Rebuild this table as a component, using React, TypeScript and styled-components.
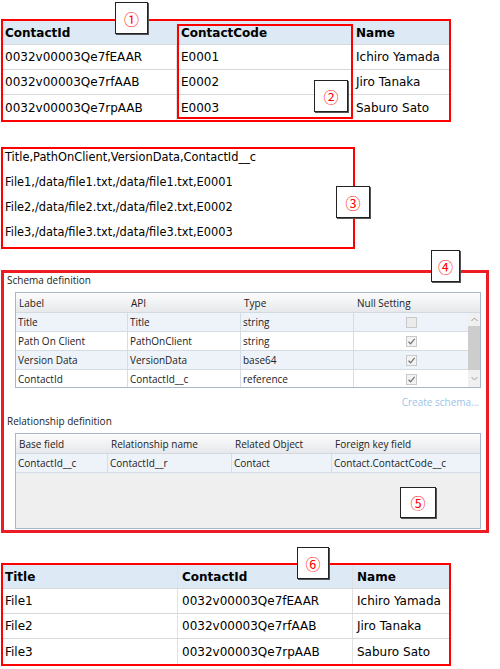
import React from 'react';
import styled, { createGlobalStyle } from 'styled-components';

const GlobalStyle = createGlobalStyle`
  html, body { margin: 0; padding: 0; background: #ffffff; }
  body { font-family: "DejaVu Sans", Verdana, sans-serif; }
`;

const Page = styled.div`
  position: relative;
  width: 500px;
  height: 669px;
  overflow: hidden;
  box-sizing: border-box;
  padding: 19px 0 0 1px;
  display: flex;
  flex-direction: column;
  align-items: flex-start;
`;

/* ---------- red framed excel-like tables ---------- */
const RedFrame = styled.div<{ $w: number; $mt?: number }>`
  position: relative;
  width: ${(p) => p.$w}px;
  margin-top: ${(p) => p.$mt ?? 0}px;
  border: 2px solid #ff0000;
  box-sizing: border-box;
`;

const InnerRedBox = styled.div`
  position: absolute;
  left: 174px;
  top: 3px;
  width: 176px;
  height: 95px;
  border: 2px solid #ff0000;
  box-sizing: border-box;
  pointer-events: none;
`;

const TRow = styled.div<{ $cols: string; $header?: boolean; $last?: boolean }>`
  display: grid;
  grid-template-columns: ${(p) => p.$cols};
  height: ${(p) => (p.$header ? 24 : 25)}px;
  background: ${(p) => (p.$header ? '#dde9f5' : '#ffffff')};
  border-bottom: ${(p) => (p.$last ? 'none' : '1px solid #d9d9d9')};
  box-sizing: border-box;
`;

const TCell = styled.div<{ $header?: boolean }>`
  display: flex;
  align-items: center;
  padding-left: 4px;
  font-size: 12px;
  font-weight: ${(p) => (p.$header ? 700 : 400)};
  color: #000000;
  white-space: nowrap;
  border-right: 1px solid #e1e1e1;
  &:first-child { padding-left: 2px; }
  &:last-child { border-right: none; }
`;

/* ---------- CSV text ---------- */
const CsvFrame = styled.div`
  width: 354px;
  margin-top: 25px;
  border: 2px solid #ff0000;
  box-sizing: border-box;
  padding: 0 4px 6px 2px;
  display: flex;
  flex-direction: column;
  gap: 8px;
`;

const CsvLine = styled.div`
  font-size: 11.4px;
  line-height: 17px;
  color: #000000;
  white-space: nowrap;
`;

/* ---------- schema panel ---------- */
const Panel = styled.div`
  width: 488px;
  margin-top: 21px;
  border: 3px solid #ed1c24;
  box-sizing: border-box;
  padding: 0 5px 1px 3px;
  display: flex;
  flex-direction: column;
  font-family: "Open Sans", "Liberation Sans", sans-serif;
  font-size: 10px;
  color: #222222;
`;

const PanelLabel = styled.div<{ $mt?: number }>`
  line-height: 14px;
  margin-top: ${(p) => p.$mt ?? 0}px;
  white-space: nowrap;
`;

const LinkText = styled.div`
  line-height: 14px;
  margin-top: 7px;
  margin-right: 2px;
  align-self: flex-end;
  color: #9dc3e6;
  white-space: nowrap;
`;

const Grid = styled.div<{ $empty?: boolean }>`
  margin: 5px 0 0 8px;
  width: 466px;
  height: 96px;
  border: 1px solid #a7b7ca;
  box-sizing: border-box;
  display: flex;
  flex-direction: column;
  overflow: hidden;
  background: ${(p) => (p.$empty ? '#efefef' : '#ffffff')};
`;

const GridHeader = styled.div<{ $cols: string }>`
  display: grid;
  grid-template-columns: ${(p) => p.$cols};
  height: 20px;
  flex: 0 0 20px;
  background: linear-gradient(#fcfcfc, #e6e8eb);
  border-bottom: 1px solid #d3d9e1;
  box-sizing: border-box;
`;

const HeadCell = styled.div`
  display: flex;
  align-items: center;
  padding-left: 3px;
  white-space: nowrap;
  color: #222222;
`;

const GridBody = styled.div`
  display: flex;
  flex: 1;
  min-height: 0;
`;

const RowsArea = styled.div`
  flex: 1;
  display: flex;
  flex-direction: column;
  overflow: hidden;
`;

const GRow = styled.div<{ $cols: string; $tint?: boolean }>`
  display: grid;
  grid-template-columns: ${(p) => p.$cols};
  height: 19px;
  flex: 0 0 19px;
  background: ${(p) => (p.$tint ? '#eef3fa' : '#ffffff')};
  border-bottom: 1px solid #d6dce4;
  box-sizing: border-box;
`;

const GCell = styled.div<{ $center?: boolean }>`
  display: flex;
  align-items: center;
  justify-content: ${(p) => (p.$center ? 'center' : 'flex-start')};
  padding-left: ${(p) => (p.$center ? 0 : 2)}px;
  border-right: 1px solid #d6dce4;
  white-space: nowrap;
  overflow: hidden;
  &:last-child { border-right: none; }
`;

const Scrollbar = styled.div`
  width: 12px;
  flex: 0 0 12px;
  background: #f0f0f0;
  display: flex;
  flex-direction: column;
`;

const ScrollBtn = styled.div<{ $h: number }>`
  height: ${(p) => p.$h}px;
  display: flex;
  align-items: center;
  justify-content: center;
`;

const Thumb = styled.div`
  height: 44px;
  background: #cdcdcd;
`;

const CheckBox = styled.span<{ $on: boolean }>`
  width: 11px;
  height: 11px;
  box-sizing: border-box;
  border: 1px solid #c9c9c9;
  background: ${(p) => (p.$on ? '#f3f3f3' : '#ebebeb')};
  display: flex;
  align-items: center;
  justify-content: center;
`;

/* ---------- callouts ---------- */
const Callout = styled.div<{ $x: number; $y: number; $w: number; $h: number }>`
  position: absolute;
  left: ${(p) => p.$x}px;
  top: ${(p) => p.$y}px;
  width: ${(p) => p.$w}px;
  height: ${(p) => p.$h}px;
  box-sizing: border-box;
  background: #ffffff;
  border: 1px solid #222222;
  box-shadow: 1px 1px 0 #555555;
  display: flex;
  align-items: center;
  justify-content: center;
  font-family: "Noto Sans CJK JP", "DejaVu Sans", sans-serif;
  font-size: 15px;
  line-height: 1;
  color: #ff0000;
`;

const Chevron = ({ up }: { up?: boolean }) => (
  <svg width="7" height="5" viewBox="0 0 7 5">
    <path
      d={up ? 'M0.5 4 L3.5 1 L6.5 4' : 'M0.5 1 L3.5 4 L6.5 1'}
      fill="none"
      stroke="#9a9a9a"
      strokeWidth="1"
    />
  </svg>
);

const Check = ({ on }: { on: boolean }) => (
  <CheckBox $on={on}>
    {on && (
      <svg width="9" height="9" viewBox="0 0 9 9">
        <path d="M1.5 4.8 L3.6 6.8 L7.6 1.8" fill="none" stroke="#767676" strokeWidth="1.3" />
      </svg>
    )}
  </CheckBox>
);

const contacts = [
  ['0032v00003Qe7fEAAR', 'E0001', 'Ichiro Yamada'],
  ['0032v00003Qe7rfAAB', 'E0002', 'Jiro Tanaka'],
  ['0032v00003Qe7rpAAB', 'E0003', 'Saburo Sato'],
];

const files = [
  ['File1', '0032v00003Qe7fEAAR', 'Ichiro Yamada'],
  ['File2', '0032v00003Qe7rfAAB', 'Jiro Tanaka'],
  ['File3', '0032v00003Qe7rpAAB', 'Saburo Sato'],
];

const csv = [
  'Title,PathOnClient,VersionData,ContactId__c',
  'File1,/data/file1.txt,/data/file1.txt,E0001',
  'File2,/data/file2.txt,/data/file2.txt,E0002',
  'File3,/data/file3.txt,/data/file3.txt,E0003',
];

const schema: [string, string, string, boolean][] = [
  ['Title', 'Title', 'string', false],
  ['Path On Client', 'PathOnClient', 'string', true],
  ['Version Data', 'VersionData', 'base64', true],
  ['ContactId', 'ContactId__c', 'reference', true],
];

const SCHEMA_COLS = '112px 113px 113px 114px';
const REL_COLS = '92px 124px 100px 148px';

function DataTable({ cols, head, rows }: { cols: string; head: string[]; rows: string[][] }) {
  return (
    <>
      <TRow $cols={cols} $header>
        {head.map((h) => (
          <TCell key={h} $header>{h}</TCell>
        ))}
      </TRow>
      {rows.map((r, i) => (
        <TRow key={i} $cols={cols} $last={i === rows.length - 1}>
          {r.map((c, j) => (
            <TCell key={j}>{c}</TCell>
          ))}
        </TRow>
      ))}
    </>
  );
}

export default function App() {
  return (
    <>
      <GlobalStyle />
      <Page>
        <RedFrame $w={450}>
          <DataTable cols="174px 175px 1fr" head={['ContactId', 'ContactCode', 'Name']} rows={contacts} />
          <InnerRedBox />
        </RedFrame>

        <CsvFrame>
          {csv.map((l) => (
            <CsvLine key={l}>{l}</CsvLine>
          ))}
        </CsvFrame>

        <Panel>
          <PanelLabel>Schema definition</PanelLabel>
          <Grid>
            <GridHeader $cols={`${SCHEMA_COLS} 12px`}>
              <HeadCell>Label</HeadCell>
              <HeadCell>API</HeadCell>
              <HeadCell>Type</HeadCell>
              <HeadCell>Null Setting</HeadCell>
              <HeadCell />
            </GridHeader>
            <GridBody>
              <RowsArea>
                {schema.map(([label, api, type, nul], i) => (
                  <GRow key={label} $cols={SCHEMA_COLS} $tint={i % 2 === 0}>
                    <GCell>{label}</GCell>
                    <GCell>{api}</GCell>
                    <GCell>{type}</GCell>
                    <GCell $center>
                      <Check on={nul} />
                    </GCell>
                  </GRow>
                ))}
              </RowsArea>
              <Scrollbar>
                <ScrollBtn $h={13}>
                  <Chevron up />
                </ScrollBtn>
                <Thumb />
                <ScrollBtn $h={17}>
                  <Chevron />
                </ScrollBtn>
              </Scrollbar>
            </GridBody>
          </Grid>
          <LinkText>Create schema...</LinkText>
          <PanelLabel $mt={5}>Relationship definition</PanelLabel>
          <Grid $empty>
            <GridHeader $cols={REL_COLS}>
              <HeadCell>Base field</HeadCell>
              <HeadCell>Relationship name</HeadCell>
              <HeadCell>Related Object</HeadCell>
              <HeadCell>Foreign key field</HeadCell>
            </GridHeader>
            <GRow $cols={REL_COLS} $tint>
              <GCell>ContactId__c</GCell>
              <GCell>ContactId__r</GCell>
              <GCell>Contact</GCell>
              <GCell>Contact.ContactCode__c</GCell>
            </GRow>
          </Grid>
        </Panel>

        <RedFrame $w={450} $mt={30}>
          <DataTable cols="175px 175px 1fr" head={['Title', 'ContactId', 'Name']} rows={files} />
        </RedFrame>

        <Callout $x={115} $y={2} $w={33} $h={32}>①</Callout>
        <Callout $x={314} $y={80} $w={34} $h={32}>②</Callout>
        <Callout $x={336} $y={186} $w={34} $h={32}>③</Callout>
        <Callout $x={431} $y={250} $w={29} $h={32}>④</Callout>
        <Callout $x={400} $y={487} $w={36} $h={31}>⑤</Callout>
        <Callout $x={297} $y={547} $w={32} $h={32}>⑥</Callout>
      </Page>
    </>
  );
}
